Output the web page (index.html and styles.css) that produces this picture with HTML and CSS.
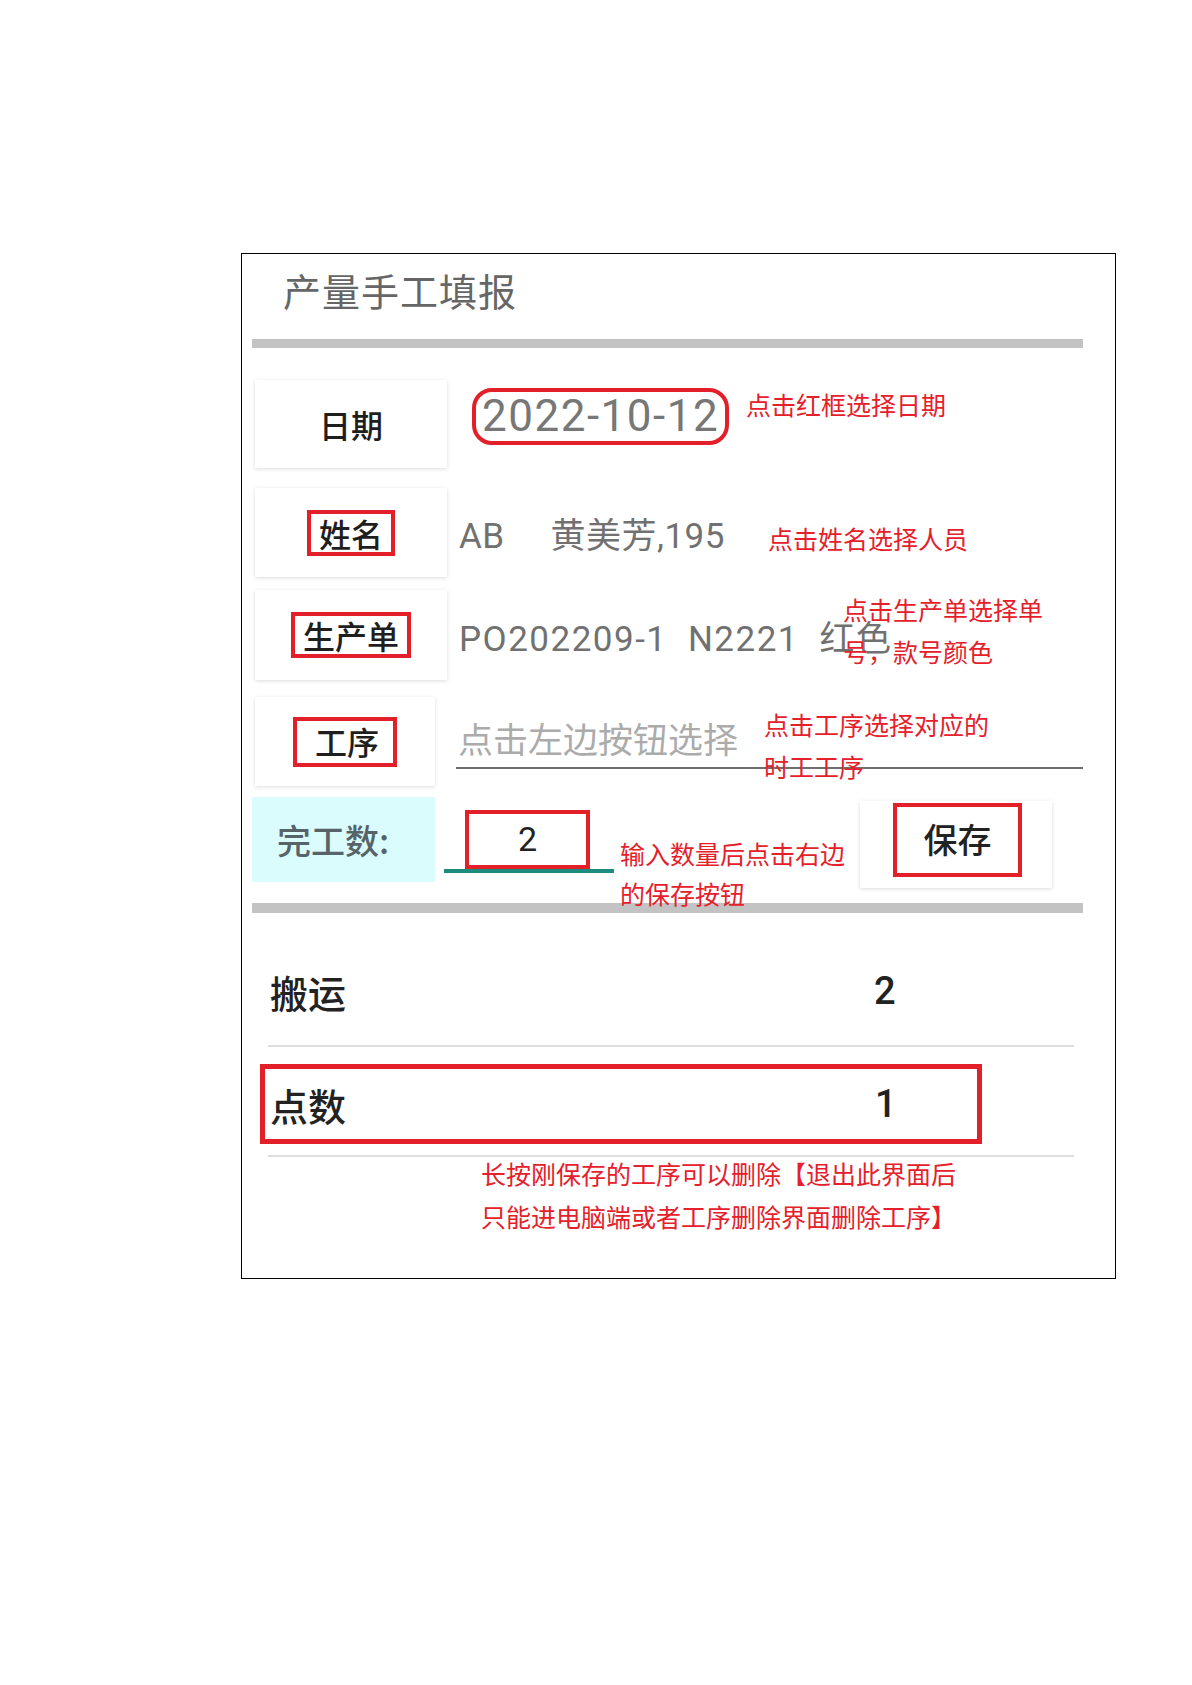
FILE: index.html
```html
<!DOCTYPE html>
<html lang="zh-CN">

<head>
    <meta charset="UTF-8">
    <meta name="viewport" content="width=device-width, initial-scale=1.0">
    <title>产量手工填报</title>
    <link rel="stylesheet" href="styles.css">
</head>

<body>
    <div class="sheet">
        <div class="panel">
            <h1 class="panel-title">产量手工填报</h1>
            <div class="bar"></div>

            <!-- 日期 -->
            <div class="field-row row-date">
                <div class="field-btn">日期</div>
                <span class="date-oval">2022-10-12</span>
                <span class="note note-date">点击红框选择日期</span>
            </div>

            <!-- 姓名 -->
            <div class="field-row row-name">
                <div class="field-btn"><span class="mark">姓名</span></div>
                <span class="field-value">AB&nbsp;&nbsp;&nbsp;&nbsp; 黄美芳,195</span>
                <span class="note note-name">点击姓名选择人员</span>
            </div>

            <!-- 生产单 -->
            <div class="field-row row-order">
                <div class="field-btn"><span class="mark">生产单</span></div>
                <span class="field-value order-value">PO202209-1&nbsp; N2221&nbsp; 红色</span>
                <span class="note note-order">点击生产单选择单<br>号，款号颜色</span>
            </div>

            <!-- 工序 -->
            <div class="field-row row-step">
                <div class="field-btn btn-narrow"><span class="mark mark-step">工序</span></div>
                <div class="step-input">点击左边按钮选择</div>
                <span class="note note-step">点击工序选择对应的<br>时工工序</span>
            </div>

            <!-- 完工数 -->
            <div class="field-row row-qty">
                <div class="qty-label">完工数:</div>
                <div class="qty-input"><span class="qty-box">2</span></div>
                <span class="note note-qty">输入数量后点击右边<br>的保存按钮</span>
                <div class="save-btn"><span class="save-mark">保存</span></div>
            </div>

            <div class="bar bar-bottom"></div>

            <div class="result-list">
                <div class="result-row">
                    <span class="result-name">搬运</span>
                    <span class="result-num">2</span>
                </div>
                <div class="result-row">
                    <div class="result-mark">
                        <span class="result-name">点数</span>
                        <span class="result-num">1</span>
                    </div>
                </div>
            </div>

            <p class="tip">长按刚保存的工序可以删除【退出此界面后<br>只能进电脑端或者工序删除界面删除工序】</p>
        </div>
    </div>
</body>

</html>
```

FILE: styles.css
```css
body {
    margin: 0;
    background: #fff;
    font-family: Roboto, "Noto Sans CJK SC", sans-serif;
}

.sheet {
    padding: 253px 0 0 241px;
}

.panel {
    width: 875px;
    height: 1026px;
    box-sizing: border-box;
    border: 1px solid #000;
}

.panel-title {
    margin: 12px 0 0 41px;
    font-size: 38px;
    line-height: 48px;
    font-weight: 400;
    letter-spacing: 1px;
    color: #666;
    font-family: "Noto Sans CJK SC", sans-serif;
}

.bar {
    height: 9px;
    margin: 25px 32px 0 10px;
    background: #c3c3c3;
}

.bar-bottom {
    height: 10px;
    margin-top: 15px;
}

/* rows */
.field-row {
    position: relative;
    display: flex;
    align-items: center;
    padding-left: 13px;
}

.row-date {
    margin-top: 32px;
    height: 88px;
}

.row-name {
    margin-top: 20px;
    height: 89px;
}

.row-order {
    margin-top: 13px;
    height: 90px;
}

.row-step {
    margin-top: 17px;
    height: 89px;
    align-items: flex-start;
}

.row-qty {
    margin-top: 11px;
    height: 91px;
    padding-left: 10px;
    align-items: flex-start;
}

.field-btn {
    width: 192px;
    height: 100%;
    flex-shrink: 0;
    display: flex;
    align-items: center;
    justify-content: center;
    background: #fff;
    box-shadow: 0 1px 4px rgba(0, 0, 0, 0.14);
    font-size: 32px;
    font-weight: 500;
    color: #1e1e1e;
    font-family: "Noto Sans CJK SC", sans-serif;
}

.btn-narrow {
    width: 180px;
}

.mark {
    border: 4px solid #e3202a;
    padding: 0 8px;
    line-height: 38px;
}

.mark-step {
    padding: 0 14px 2px 18px;
    line-height: 40px;
}

.date-oval {
    align-self: flex-start;
    margin: 8px 0 0 25px;
    height: 57px;
    box-sizing: border-box;
    border: 4px solid #e3202a;
    border-radius: 20px;
    padding: 0 6px;
    font-size: 44px;
    line-height: 48px;
    letter-spacing: 1.5px;
    color: #777;
}

.field-value {
    margin-left: 12px;
    font-size: 35px;
    letter-spacing: 0.5px;
    color: #717171;
    white-space: nowrap;
}

.order-value {
    letter-spacing: 1.5px;
}

.step-input {
    flex: 1;
    margin: 15px 32px 0 21px;
    height: 57px;
    box-sizing: border-box;
    border-bottom: 2px solid #6f6f6f;
    padding-left: 2px;
    font-size: 35px;
    line-height: 52px;
    color: #ababab;
    font-family: "Noto Sans CJK SC", sans-serif;
}

/* quantity row */
.qty-label {
    width: 158px;
    height: 85px;
    padding-left: 25px;
    background: #dafcfd;
    font-size: 34px;
    font-weight: 500;
    line-height: 85px;
    color: #56646a;
    font-family: "Noto Sans CJK SC", sans-serif;
}

.qty-input {
    margin: 13px 0 0 9px;
    width: 125px;
    padding: 0 24px 0 21px;
    border-bottom: 4px solid #1d8b7d;
}

.qty-box {
    display: block;
    height: 59px;
    box-sizing: border-box;
    border: 4px solid #e3202a;
    text-align: center;
    font-size: 34px;
    line-height: 50px;
    color: #222;
}

.save-btn {
    margin: 4px 63px 0 auto;
    width: 192px;
    height: 87px;
    box-sizing: border-box;
    padding: 2px 30px 0 33px;
    background: #fff;
    box-shadow: 0 1px 4px rgba(0, 0, 0, 0.14);
}

.save-mark {
    display: block;
    height: 74px;
    box-sizing: border-box;
    border: 4px solid #e3202a;
    text-align: center;
    font-size: 34px;
    font-weight: 500;
    line-height: 64px;
    color: #222;
    font-family: "Noto Sans CJK SC", sans-serif;
}

/* red annotations */
.note {
    position: absolute;
    font-family: "Noto Sans CJK SC", sans-serif;
    font-size: 25px;
    line-height: 30px;
    color: #e5202a;
    white-space: nowrap;
}

.note-date {
    left: 504px;
    top: 9px;
}

.note-name {
    left: 526px;
    top: 35px;
}

.note-order {
    left: 601px;
    top: -2px;
    line-height: 42px;
}

.note-step {
    left: 522px;
    top: 6px;
    line-height: 42px;
}

.note-qty {
    left: 378px;
    top: 36px;
    line-height: 40px;
}

/* saved list */
.result-list {
    margin-top: 24px;
}

.result-row {
    display: flex;
    align-items: center;
    height: 110px;
    box-sizing: border-box;
    margin: 0 41px 0 26px;
    border-bottom: 2px solid #dedede;
    font-size: 38px;
    color: #222;
}

.result-row > .result-name {
    margin-left: 2px;
}

.result-name {
    width: 604px;
    font-weight: 500;
    font-family: "Noto Sans CJK SC", sans-serif;
}

.result-num {
    font-weight: 500;
}

.result-mark {
    display: flex;
    align-items: center;
    margin: 6px 0 0 -8px;
    width: 722px;
    height: 80px;
    box-sizing: border-box;
    border: 5px solid #e3202a;
    padding-left: 5px;
}

.result-mark .result-name {
    width: 605px;
}

.tip {
    margin: -5px 0 0 239px;
    font-family: "Noto Sans CJK SC", sans-serif;
    font-size: 25px;
    line-height: 43px;
    color: #e5202a;
}
```
